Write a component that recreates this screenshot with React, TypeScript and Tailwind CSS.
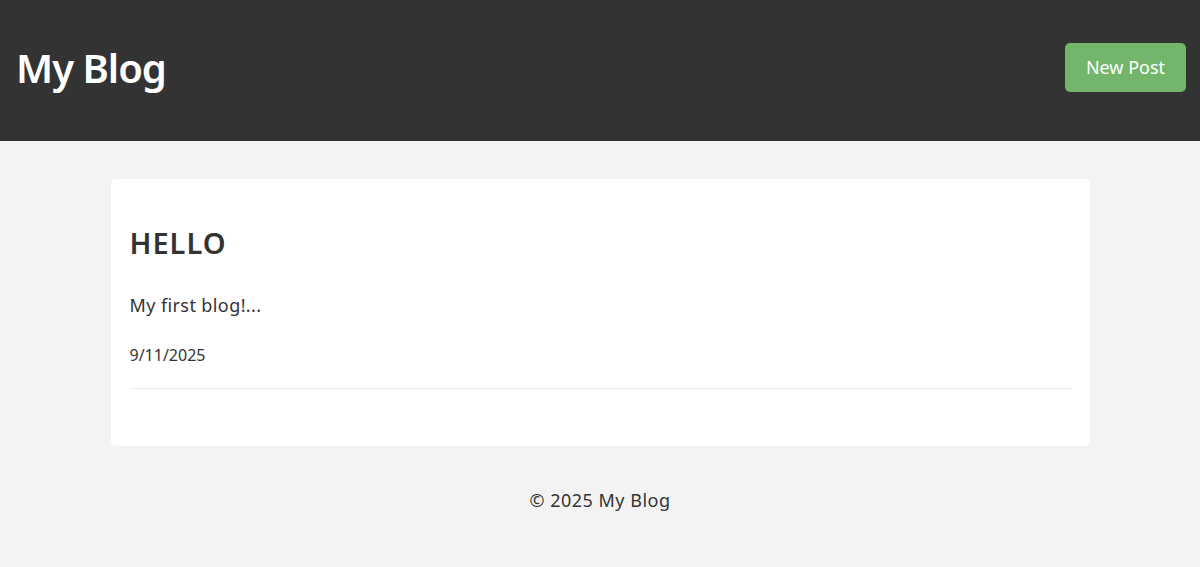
import React from 'react';

const posts = [
  { id: 1, title: 'HELLO', excerpt: 'My first blog!...', date: '9/11/2025' },
];

const App = () => {
  return (
    <div className="min-h-[567px] bg-[#f3f3f3] text-[#333] font-['Noto_Sans','Liberation_Sans',Arial,sans-serif]">
      <header className="h-[141px] bg-[#333333] flex items-center justify-between pl-4 pr-[14px] pb-[6px]">
        <h1 className="text-[40px] leading-[48px] font-semibold tracking-[-1px] text-white">My Blog</h1>
        <button className="w-[121px] h-[49px] rounded-[5px] bg-[#73b66b] text-white text-[18px]">
          New Post
        </button>
      </header>

      <main className="w-[979px] mx-auto mt-[38px] bg-white rounded-[5px] px-[19px] pt-[47px] pb-[57px]">
        {posts.map((post) => (
          <article key={post.id} className="border-b border-[#ebebeb] pb-[23px]">
            <h2 className="text-[29px] leading-[34px] font-semibold tracking-[1px]">{post.title}</h2>
            <p className="mt-[33px] text-[18px] leading-[24px] tracking-[0.4px]">{post.excerpt}</p>
            <p className="mt-[28px] text-[16px] leading-[20px]">{post.date}</p>
          </article>
        ))}
      </main>

      <footer className="mt-[42px] text-center text-[18px] leading-[24px] tracking-[0.5px] pb-8">
        © 2025 My Blog
      </footer>
    </div>
  );
};

export default App;
